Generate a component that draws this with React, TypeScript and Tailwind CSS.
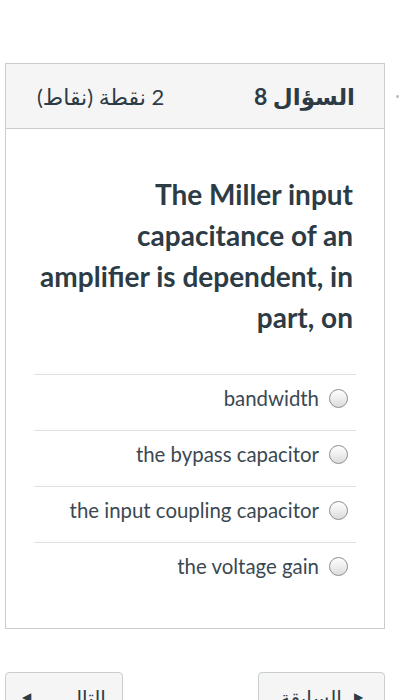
import React from 'react';

const options = [
    'bandwidth',
    'the bypass capacitor',
    'the input coupling capacitor',
    'the voltage gain',
];

const Radio: React.FC = () => (
    <span className="shrink-0 w-[19px] h-[19px] rounded-full border border-[#8a8f93] bg-gradient-to-b from-[#ffffff] to-[#dcdcdc]" />
);

const App: React.FC = () => {
    return (
        <div className="relative w-[400px] h-[700px] overflow-hidden bg-white text-[#2d3b45]" style={{ fontFamily: 'Lato, "DejaVu Sans", sans-serif' }}>
            <span className="absolute right-[1px] top-[95px] w-[3px] h-[3px] rounded-full bg-[#b8bcc0]" />
            <div className="pt-[63px] pl-[5px] pr-[15px]">
                <div className="border border-[#c7cdd1] bg-white">
                    <div dir="rtl" className="flex items-center justify-between h-[65px] px-[29px] bg-[#f5f5f5] border-b border-[#c7cdd1]">
                        <span className="text-[23px] font-bold text-[#2d3b45]">السؤال 8</span>
                        <span className="text-[22px] text-[#2d3b45] pl-[2px]">2 نقطة (نقاط)</span>
                    </div>
                    <div className="px-[28px] pt-[45px] pb-[30px]">
                        <p className="text-right text-[28px] font-bold leading-[41px] pr-[3px]">
                            The Miller input capacitance of an amplifier is dependent, in part, on
                        </p>
                        <div className="mt-[36px]">
                            {options.map(opt => (
                                <div key={opt} className="flex items-center justify-end gap-[10px] h-[56px] border-t border-[#dfe2e4] pr-[8px] pb-[8px]">
                                    <span className="text-[20.4px] text-[#3b4852]">{opt}</span>
                                    <Radio />
                                </div>
                            ))}
                        </div>
                    </div>
                </div>
                <div className="flex justify-between mt-[43px]">
                    <button className="flex items-center justify-center gap-[28px] w-[118px] h-[44px] rounded-[4px] border border-[#c7cdd1] bg-[#f5f5f5] text-[20px] text-[#2d3b45] pt-[6px]">
                        <span className="text-[12px]">◀</span>
                        <span>التالي</span>
                    </button>
                    <button className="flex items-center justify-center gap-[12px] w-[127px] h-[44px] rounded-[4px] border border-[#c7cdd1] bg-[#f5f5f5] text-[20px] text-[#2d3b45] pt-[6px]">
                        <span>السابقة</span>
                        <span className="text-[12px]">▶</span>
                    </button>
                </div>
            </div>
        </div>
    );
};

export default App;
